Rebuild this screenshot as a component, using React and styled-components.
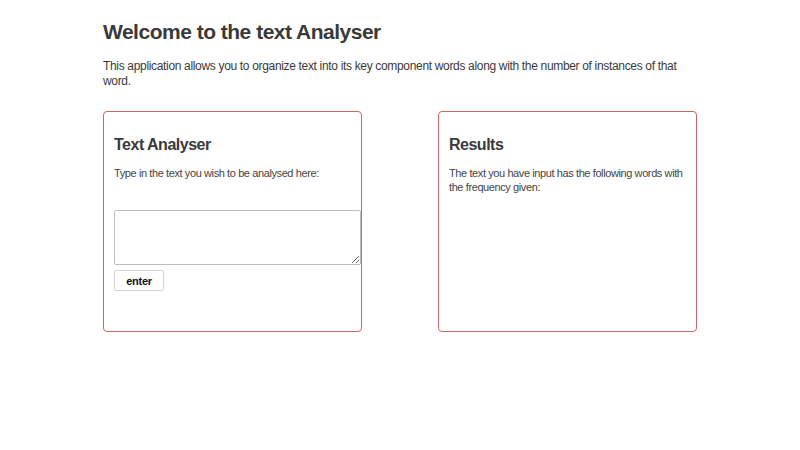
import React from "react";
import styled, { createGlobalStyle } from "styled-components";

const Global = createGlobalStyle`
  html, body { margin: 0; padding: 0; background: #fff; }
  body { font-family: "Liberation Sans", Arial, sans-serif; color: #3b3b3b; }
`;

const Page = styled.div`
  width: 594px;
  margin: 0 auto;
  padding-top: 20px;
`;

const Title = styled.h1`
  font-size: 21px;
  letter-spacing: -0.5px;
  font-weight: bold;
  margin: 0 0 15px 0;
  line-height: 24px;
  color: #3a3a3a;
`;

const Intro = styled.p`
  font-size: 12px;
  letter-spacing: -0.33px;
  line-height: 15px;
  margin: 0 0 22px 0;
  color: #3a3a3a;
`;

const Columns = styled.div`
  display: flex;
  justify-content: space-between;
`;

const Card = styled.section`
  box-sizing: border-box;
  width: 259px;
  height: 221px;
  border: 1px solid #c96868;
  border-radius: 4px;
  padding: 23px 10px 10px 10px;
  display: flex;
  flex-direction: column;
  align-items: flex-start;
`;

const CardTitle = styled.h2`
  font-size: 16px;
  letter-spacing: -0.5px;
  font-weight: bold;
  margin: 0 0 11px 0;
  line-height: 20px;
  color: #3a3a3a;
`;

const CardText = styled.p`
  font-size: 11px;
  letter-spacing: -0.4px;
  line-height: 14px;
  margin: 0;
  color: #444;
`;

const TextArea = styled.textarea`
  box-sizing: border-box;
  width: 247px;
  height: 55px;
  margin-top: 30px;
  border: 1px solid #bdbdbd;
  border-radius: 2px;
  resize: vertical;
  font-family: inherit;
`;

const Button = styled.button`
  box-sizing: border-box;
  width: 50px;
  height: 21px;
  margin-top: 5px;
  background: #fff;
  border: 1px solid #d4d4d4;
  border-radius: 2px;
  font-family: "Liberation Sans", Arial, sans-serif;
  font-weight: bold;
  font-size: 11px;
  letter-spacing: -0.3px;
  color: #111;
  padding: 0;
`;

export default function App() {
  return (
    <>
      <Global />
      <Page>
        <Title>Welcome to the text Analyser</Title>
        <Intro>
          This application allows you to organize text into its key component words along with the number of instances of that word.
        </Intro>
        <Columns>
          <Card>
            <CardTitle>Text Analyser</CardTitle>
            <CardText>Type in the text you wish to be analysed here:</CardText>
            <TextArea />
            <Button>enter</Button>
          </Card>
          <Card>
            <CardTitle>Results</CardTitle>
            <CardText>The text you have input has the following words with the frequency given:</CardText>
          </Card>
        </Columns>
      </Page>
    </>
  );
}
